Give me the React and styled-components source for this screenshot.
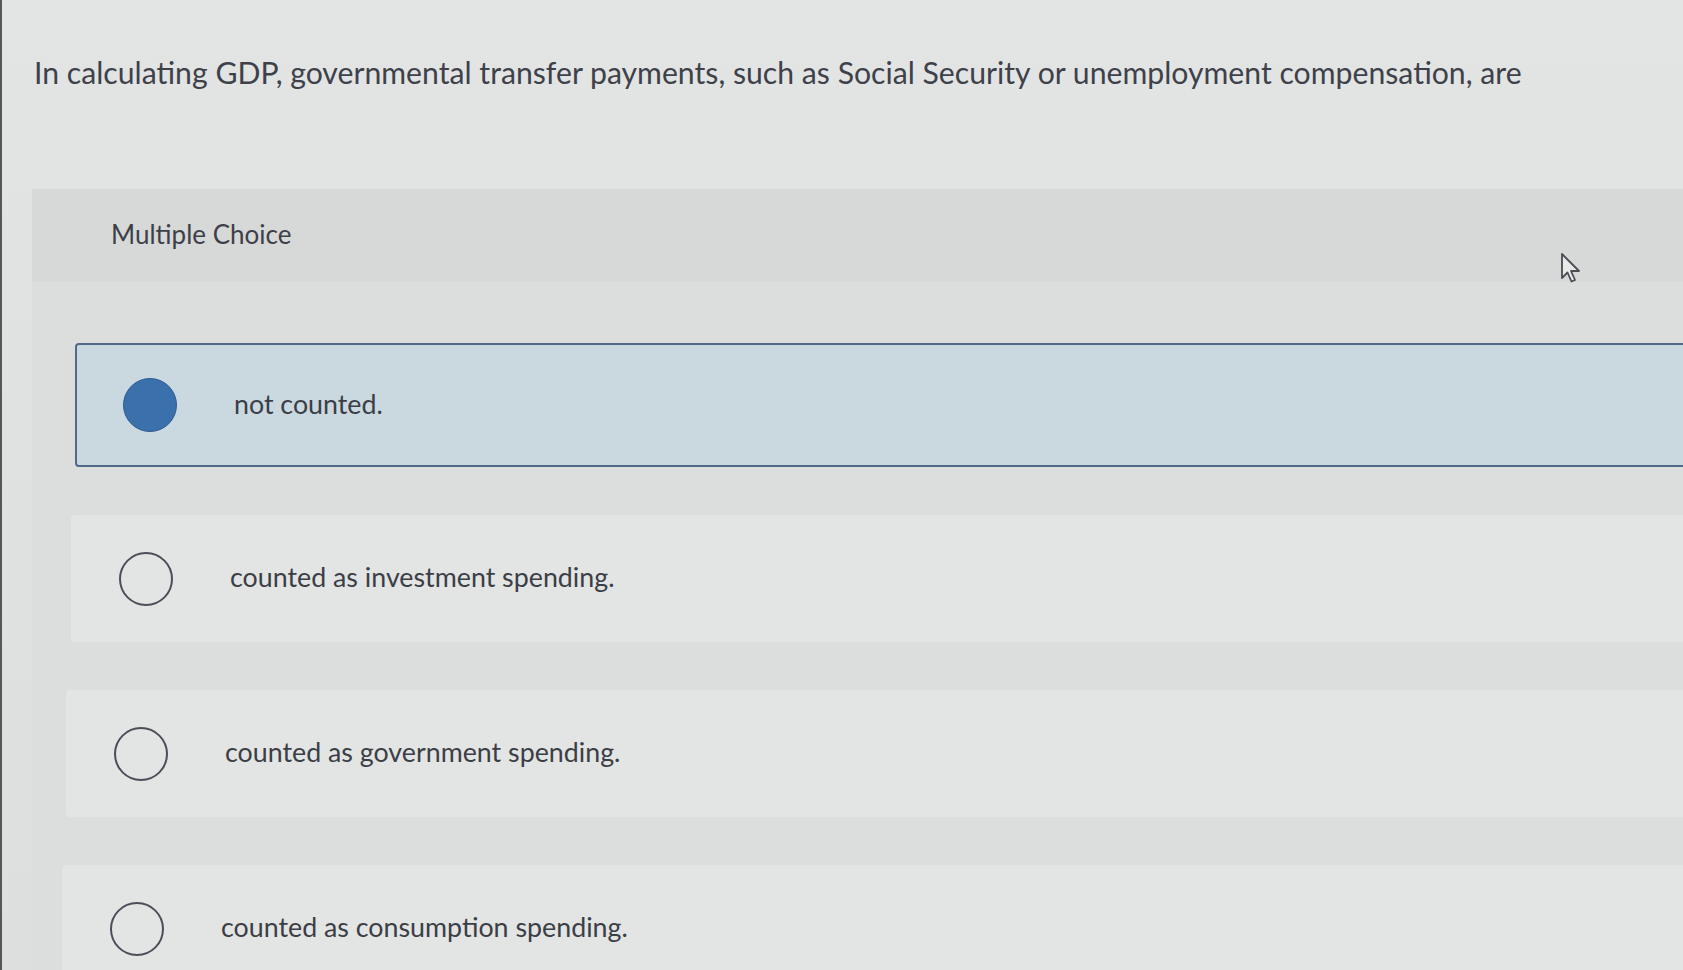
import React from "react";
import styled, { createGlobalStyle } from "styled-components";

const Global = createGlobalStyle`
  html, body { margin: 0; padding: 0; }
  body {
    background: #e0e3e2;
    font-family: Lato, "Open Sans", "Liberation Sans", sans-serif;
    overflow: hidden;
  }
`;

const Page = styled.div`
  position: relative;
  width: 1683px;
  height: 970px;
  box-sizing: border-box;
  border-left: 2px solid #55585b;
  background: linear-gradient(180deg, #e2e5e4 0%, #dfe2e1 40%, #dcdfde 100%);
  overflow: hidden;
`;

const Question = styled.h1`
  margin: 0;
  padding: 53px 0 0 32px;
  height: 189px;
  box-sizing: border-box;
  font-size: 30.2px;
  font-weight: 400;
  line-height: 38px;
  color: #3f414a;
  white-space: nowrap;
`;

const Panel = styled.section`
  margin-left: 30px;
  background: #dbdedd;
  min-height: 800px;
`;

const PanelHeader = styled.div`
  height: 93px;
  box-sizing: border-box;
  display: flex;
  align-items: center;
  padding: 0 0 4px 79px;
  background: #d6d9d8;
  font-size: 26px;
  color: #3e4049;
`;

const OptionList = styled.div`
  display: flex;
  flex-direction: column;
  gap: 48px;
  padding: 61px 0 0 43px;
`;

const Option = styled.div`
  display: flex;
  align-items: center;
  height: ${(p) => (p.$selected ? 120 : 127)}px;
  margin-left: ${(p) => p.$indent}px;
  margin-right: -20px;
  padding-left: ${(p) => (p.$selected ? 46 : 48)}px;
  border-radius: 4px;
  background: ${(p) => (p.$selected ? "#cad8df" : "#e2e5e4")};
  border: ${(p) => (p.$selected ? "2px solid #53698a" : "none")};
`;

const Radio = styled.span`
  flex: none;
  width: 54px;
  height: 54px;
  box-sizing: border-box;
  border-radius: 50%;
  background: ${(p) => (p.$checked ? "#3a71ad" : "transparent")};
  border: ${(p) => (p.$checked ? "1.5px solid #2e5c92" : "2.5px solid #4b4e58")};
`;

const Label = styled.span`
  margin-left: 57px;
  margin-bottom: 3px;
  font-size: 26.8px;
  color: #3c3e46;
`;

const Cursor = styled.svg`
  position: absolute;
  left: 1558px;
  top: 252px;
`;

const options = [
  { text: "not counted.", selected: true, indent: 0 },
  { text: "counted as investment spending.", indent: -4 },
  { text: "counted as government spending.", indent: -9 },
  { text: "counted as consumption spending.", indent: -13 },
];

export default function App() {
  return (
    <>
      <Global />
      <Page>
        <Question>
          In calculating GDP, governmental transfer payments, such as Social Security or unemployment compensation, are
        </Question>
        <Panel>
          <PanelHeader>Multiple Choice</PanelHeader>
          <OptionList>
            {options.map((o) => (
              <Option key={o.text} $selected={o.selected} $indent={o.indent}>
                <Radio $checked={o.selected} />
                <Label>{o.text}</Label>
              </Option>
            ))}
          </OptionList>
        </Panel>
        <Cursor width="22" height="32" viewBox="0 0 22 32">
          <path
            d="M2 2 L2 26 L7.5 20.5 L11.5 29.5 L15 28 L11 19 L19 19 Z"
            fill="#e8eaea"
            stroke="#4a4d52"
            strokeWidth="1.8"
            strokeLinejoin="round"
          />
        </Cursor>
      </Page>
    </>
  );
}
